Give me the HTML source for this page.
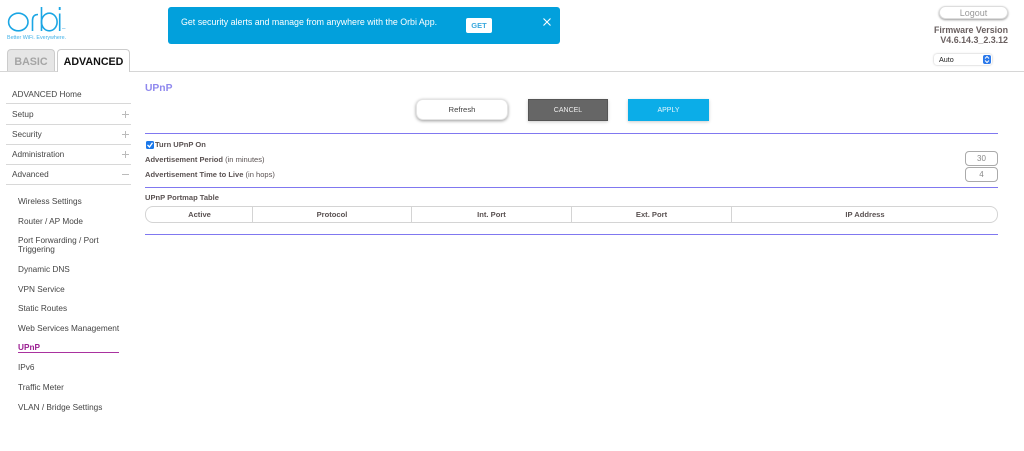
<!DOCTYPE html>
<html><head><meta charset="utf-8"><style>
html,body{margin:0;padding:0;background:#fff}
body{width:1024px;height:451px;position:relative;overflow:hidden;font-family:"Liberation Sans",sans-serif;color:#4a4545}
.a{position:absolute;white-space:nowrap}
.m{font-size:8.25px;line-height:14px;color:#444;left:12px}
.s{font-size:8.25px;line-height:14px;color:#444;left:18px}
.l{position:absolute;left:6px;width:125px;height:1px;background:#d8d8d8}
.p{position:absolute;left:122px;width:7px;height:1px;background:#bbb}
.v{position:absolute;left:125px;width:1px;height:7px;background:#bbb}
.h{position:absolute;left:145px;width:853px;height:1px;background:#8078f0}
.b{font-size:7.55px;font-weight:bold;line-height:14px;color:#5a5252}
.n{font-weight:normal}
.th{position:absolute;top:206px;height:16px;line-height:18px;font-size:7.6px;font-weight:bold;color:#5a5252;text-align:center;border-left:1px solid #d4d4d4;box-sizing:border-box}
.box{position:absolute;left:965px;width:33px;height:15px;box-sizing:border-box;border:1px solid #aaa;border-radius:4px;font-size:8px;line-height:13px;text-align:center;color:#888}
</style></head><body>

<svg class="a" style="left:0;top:0" width="70" height="36" viewBox="0 0 70 36" fill="none" stroke="#1ba6e4" stroke-width="1.6">
<ellipse cx="18.300" cy="22" rx="9.700" ry="8.800"/>
<path d="M32.500 31V20.500q0-6 5.500-6"/>
<path d="M41.500 7v24"/><ellipse cx="49.300" cy="22" rx="7.800" ry="8.800"/>
<path d="M59.700 13.500V31"/><path d="M59.700 7v3" stroke-width="1.900"/>
<path d="M62 28.500h3.500" stroke-width=".7" stroke="#8cc8ea"/>
</svg>
<div class="a" style="left:7px;top:34px;font-size:5.35px;line-height:8px;color:#3fb1e8">Better WiFi. Everywhere.</div>

<div class="a" style="left:7px;top:49px;width:48px;height:22px;box-sizing:border-box;background:#e6e6e6;border:1px solid #ccc;border-bottom:0;border-radius:4px 4px 0 0;text-align:center;font-size:10.7px;font-weight:bold;line-height:24px;color:#a5a5a5">BASIC</div>
<div class="a" style="left:57px;top:49px;width:73px;height:23px;box-sizing:border-box;background:#fff;border:1px solid #ccc;border-bottom:0;border-radius:4px 4px 0 0;text-align:center;font-size:10.7px;font-weight:bold;line-height:24px;color:#111;z-index:2">ADVANCED</div>
<div class="a" style="left:0;top:71px;width:1024px;height:1px;background:#d6d6d6"></div>

<div class="a" style="left:168px;top:7px;width:392px;height:37px;background:#02a0dc;border-radius:3px"></div>
<div class="a" style="left:181px;top:16px;font-size:8.85px;line-height:13px;color:#fff">Get security alerts and manage from anywhere with the Orbi App.</div>
<div class="a" style="left:466px;top:18px;width:26px;height:15px;background:#fff;border-radius:2px;text-align:center;font-size:7.5px;font-weight:bold;line-height:16px;color:#3aa9de">GET</div>
<svg class="a" style="left:542px;top:17px" width="10" height="10" viewBox="0 0 10 10"><path d="M1.500 1.500l7 7M8.500 1.500l-7 7" stroke="#fff" stroke-width="1.100"/></svg>

<div class="a" style="left:939px;top:6px;width:69px;height:13px;box-sizing:border-box;background:#fff;border:1px solid #ddd;border-radius:7px;box-shadow:0 1px 2px #999;text-align:center;font-size:9px;line-height:13px;color:#999">Logout</div>
<div class="a" style="right:16px;top:25px;font-size:8.9px;font-weight:bold;line-height:10px;color:#6a6060;text-align:right">Firmware Version<br>V4.6.14.3_2.3.12</div>
<div class="a" style="left:934px;top:54px;width:58px;height:11px;background:#fff;border-radius:3px;box-shadow:0 0 2px #bbb;font-size:7.2px;line-height:11px;color:#222;text-indent:5px">Auto</div>
<div class="a" style="left:983px;top:55px;width:8px;height:9px;background:#2a78ea;border-radius:2px"></div>
<svg class="a" style="left:983px;top:55px" width="8" height="9" viewBox="0 0 8 9" fill="none" stroke="#fff" stroke-width="1"><path d="M2 3.500l2-2 2 2M2 5.500l2 2 2-2"/></svg>

<div class="a m" style="top:88px">ADVANCED Home</div>
<div class="l" style="top:103px"></div>
<div class="a m" style="top:108px">Setup</div><div class="p" style="top:114px"></div><div class="v" style="top:111px"></div>
<div class="l" style="top:124px"></div>
<div class="a m" style="top:128px">Security</div><div class="p" style="top:134px"></div><div class="v" style="top:131px"></div>
<div class="l" style="top:144px"></div>
<div class="a m" style="top:148px">Administration</div><div class="p" style="top:154px"></div><div class="v" style="top:151px"></div>
<div class="l" style="top:164px"></div>
<div class="a m" style="top:168px">Advanced</div><div class="p" style="top:174px"></div>
<div class="l" style="top:184px"></div>

<div class="a s" style="top:195px">Wireless Settings</div>
<div class="a s" style="top:215px">Router / AP Mode</div>
<div class="a s" style="top:234px">Port Forwarding / Port</div>
<div class="a s" style="top:243px">Triggering</div>
<div class="a s" style="top:263px">Dynamic DNS</div>
<div class="a s" style="top:283px">VPN Service</div>
<div class="a s" style="top:302px">Static Routes</div>
<div class="a s" style="top:322px">Web Services Management</div>
<div class="a s" style="top:341px;font-weight:bold;color:#9c1f92">UPnP</div>
<div class="a" style="left:18px;top:352px;width:101px;height:1px;background:#a9329f"></div>
<div class="a s" style="top:361px">IPv6</div>
<div class="a s" style="top:381px">Traffic Meter</div>
<div class="a s" style="top:401px">VLAN / Bridge Settings</div>

<div class="a" style="left:145px;top:82px;font-size:10.3px;font-weight:bold;line-height:13px;color:#8f88ee">UPnP</div>

<div class="a" style="left:416px;top:99px;width:92px;height:21px;box-sizing:border-box;background:#fff;border:1px solid #e4e4e4;border-radius:7px;box-shadow:0 1px 3px #999;text-align:center;font-size:7.7px;line-height:19px;color:#444">Refresh</div>
<div class="a" style="left:528px;top:99px;width:80px;height:22px;box-sizing:border-box;background:#666;border:1px solid #555;box-shadow:0 1px 3px #ccc;text-align:center;font-size:7px;line-height:21px;color:#eee">CANCEL</div>
<div class="a" style="left:628px;top:99px;width:81px;height:22px;background:#0bade8;box-shadow:0 1px 3px #ccc;text-align:center;font-size:7px;line-height:23px;color:#e8f6fd">APPLY</div>

<div class="h" style="top:133px"></div>
<svg class="a" style="left:146px;top:141px" width="8" height="8" viewBox="0 0 8 8"><rect width="8" height="8" rx="1.500" fill="#1a78ea"/><path d="M1.500 4l2 2 3-4.200" fill="none" stroke="#fff" stroke-width="1.300"/></svg>
<div class="a b" style="left:155px;top:138px">Turn UPnP On</div>
<div class="a b" style="left:145px;top:153px">Advertisement Period <span class="n">(in minutes)</span></div>
<div class="a b" style="left:145px;top:168px">Advertisement Time to Live <span class="n">(in hops)</span></div>
<div class="box" style="top:151px">30</div>
<div class="box" style="top:167px">4</div>
<div class="h" style="top:187px"></div>
<div class="a b" style="left:145px;top:191px">UPnP Portmap Table</div>

<div class="a" style="left:145px;top:206px;width:853px;height:17px;box-sizing:border-box;border:1px solid #d4d4d4;border-radius:8px"></div>
<div class="th" style="left:147px;width:105px;border-left:0">Active</div>
<div class="th" style="left:252px;width:159px">Protocol</div>
<div class="th" style="left:411px;width:160px">Int. Port</div>
<div class="th" style="left:571px;width:160px">Ext. Port</div>
<div class="th" style="left:731px;width:267px">IP Address</div>
<div class="h" style="top:234px"></div>
</body></html>
